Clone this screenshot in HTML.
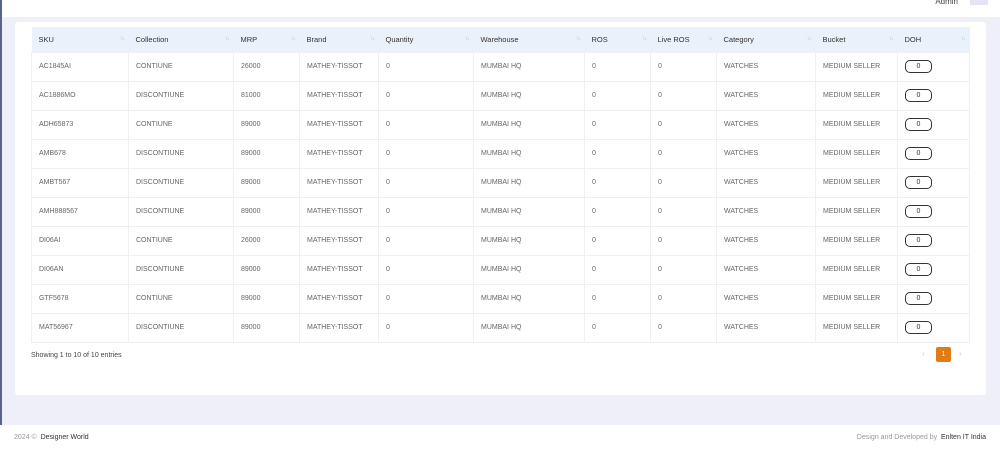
<!DOCTYPE html>
<html><head><style>
*{margin:0;padding:0;box-sizing:border-box}
body{width:1000px;height:450px;background:#eeeff8;font-family:"Liberation Sans",sans-serif;position:relative;overflow:hidden}
.top{position:absolute;left:0;top:0;width:1000px;height:17px;background:#fff}
.lb{position:absolute;left:0;top:0;width:2px;height:450px;background:#56648f}
.card{position:absolute;left:15px;top:22px;width:971px;height:373px;background:#fff;border-radius:3px}
table{position:absolute;left:31px;top:27px;border-collapse:collapse;table-layout:fixed}
th{height:25px;background:#e9f1fb;font-size:7.5px;font-weight:normal;color:#333;text-align:left;padding-left:7px;position:relative}
th:after{content:"↑↓";position:absolute;right:5px;top:9px;font-size:6px;color:#bbb;letter-spacing:-1px}
td{height:29px;font-size:7px;color:#666;padding-left:7px;border:1px solid #f0f0f0}
.doh{display:inline-block;width:27px;height:13px;border:1.3px solid #333;border-radius:5px;text-align:center;line-height:11px;font-size:7px;color:#333}
.show{position:absolute;left:31px;top:352px;font-size:7px;color:#444}
.pg{position:absolute;left:936px;top:347px;width:15px;height:15px;background:#e07b16;border-radius:2px;color:#fff;font-size:7px;text-align:center;line-height:15px}
.ar{position:absolute;top:349px;font-size:8px;color:#ccc}
.foot{position:absolute;left:0;top:425px;width:1000px;height:25px;background:#fff;font-size:7px;color:#999}
.foot span{color:#333}
</style></head><body>
<div class="top"><span style="position:absolute;right:42px;top:-3px;font-size:8px;color:#444">Admin</span><div style="position:absolute;right:12px;top:0;width:18px;height:5px;background:#e6e3f5"></div></div>
<div class="lb"></div>
<div class="card"></div>
<table>
<colgroup><col style="width:97px"><col style="width:105px"><col style="width:66px"><col style="width:79px"><col style="width:95px"><col style="width:111px"><col style="width:66px"><col style="width:66px"><col style="width:99px"><col style="width:82px"><col style="width:72px"></colgroup>
<tr><th>SKU</th><th>Collection</th><th>MRP</th><th>Brand</th><th>Quantity</th><th>Warehouse</th><th>ROS</th><th>Live ROS</th><th>Category</th><th>Bucket</th><th>DOH</th></tr>
<tr><td>AC1845AI</td><td>CONTIUNE</td><td>26000</td><td>MATHEY-TISSOT</td><td>0</td><td>MUMBAI HQ</td><td>0</td><td>0</td><td>WATCHES</td><td>MEDIUM SELLER</td><td><span class="doh">0</span></td></tr>
<tr><td>AC1886MO</td><td>DISCONTIUNE</td><td>81000</td><td>MATHEY-TISSOT</td><td>0</td><td>MUMBAI HQ</td><td>0</td><td>0</td><td>WATCHES</td><td>MEDIUM SELLER</td><td><span class="doh">0</span></td></tr>
<tr><td>ADH65873</td><td>CONTIUNE</td><td>89000</td><td>MATHEY-TISSOT</td><td>0</td><td>MUMBAI HQ</td><td>0</td><td>0</td><td>WATCHES</td><td>MEDIUM SELLER</td><td><span class="doh">0</span></td></tr>
<tr><td>AMB678</td><td>DISCONTIUNE</td><td>89000</td><td>MATHEY-TISSOT</td><td>0</td><td>MUMBAI HQ</td><td>0</td><td>0</td><td>WATCHES</td><td>MEDIUM SELLER</td><td><span class="doh">0</span></td></tr>
<tr><td>AMBT567</td><td>DISCONTIUNE</td><td>89000</td><td>MATHEY-TISSOT</td><td>0</td><td>MUMBAI HQ</td><td>0</td><td>0</td><td>WATCHES</td><td>MEDIUM SELLER</td><td><span class="doh">0</span></td></tr>
<tr><td>AMH888567</td><td>DISCONTIUNE</td><td>89000</td><td>MATHEY-TISSOT</td><td>0</td><td>MUMBAI HQ</td><td>0</td><td>0</td><td>WATCHES</td><td>MEDIUM SELLER</td><td><span class="doh">0</span></td></tr>
<tr><td>DI06AI</td><td>CONTIUNE</td><td>26000</td><td>MATHEY-TISSOT</td><td>0</td><td>MUMBAI HQ</td><td>0</td><td>0</td><td>WATCHES</td><td>MEDIUM SELLER</td><td><span class="doh">0</span></td></tr>
<tr><td>DI06AN</td><td>DISCONTIUNE</td><td>89000</td><td>MATHEY-TISSOT</td><td>0</td><td>MUMBAI HQ</td><td>0</td><td>0</td><td>WATCHES</td><td>MEDIUM SELLER</td><td><span class="doh">0</span></td></tr>
<tr><td>GTF5678</td><td>CONTIUNE</td><td>89000</td><td>MATHEY-TISSOT</td><td>0</td><td>MUMBAI HQ</td><td>0</td><td>0</td><td>WATCHES</td><td>MEDIUM SELLER</td><td><span class="doh">0</span></td></tr>
<tr><td>MAT56967</td><td>DISCONTIUNE</td><td>89000</td><td>MATHEY-TISSOT</td><td>0</td><td>MUMBAI HQ</td><td>0</td><td>0</td><td>WATCHES</td><td>MEDIUM SELLER</td><td><span class="doh">0</span></td></tr>
</table>
<div class="show">Showing 1 to 10 of 10 entries</div>
<div class="ar" style="left:922px">‹</div><div class="pg">1</div><div class="ar" style="left:959px">›</div>
<div class="foot"><div style="position:absolute;left:14px;top:9px">2024 © &nbsp;<span>Designer World</span></div><div style="position:absolute;right:14px;top:9px">Design and Developed by &nbsp;<span>Enlten IT India</span></div></div>
</body></html>
